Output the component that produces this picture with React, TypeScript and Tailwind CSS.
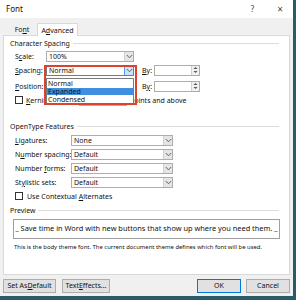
import React from "react";

const U = ({ c }: { c: string }) => <span className="underline underline-offset-[1px]">{c}</span>;

const Chevron = () => (
  <svg width="7" height="5" viewBox="0 0 7 5" className="block">
    <path d="M0.8 1 L3.5 3.8 L6.2 1" fill="none" stroke="#555" strokeWidth="0.9" />
  </svg>
);

const Combo = ({ value, w, active }: { value: string; w: string; active?: boolean }) => (
  <div className={`${w} h-[11px] flex items-stretch border ${active ? "border-[#7a7a7a]" : "border-[#adadad]"} bg-white`}>
    <div className="flex-1 flex items-center pl-[2px] text-[7px] leading-none">{value}</div>
    <div className={`w-[9px] flex items-center justify-center ${active ? "bg-[#cce4f7] border-l border-[#569de5]" : "bg-[#e5e5e5] border-l border-[#d0d0d0]"}`}>
      <Chevron />
    </div>
  </div>
);

const Spin = () => (
  <div className="w-[46px] h-[11px] flex border border-[#adadad] bg-white">
    <div className="flex-1" />
    <div className="w-[8px] flex flex-col items-center justify-center bg-[#f0f0f0] border-l border-[#d0d0d0]">
      <svg width="5" height="8" viewBox="0 0 5 8">
        <path d="M0.5 3 L2.5 1 L4.5 3 Z" fill="#555" />
        <path d="M0.5 5 L2.5 7 L4.5 5 Z" fill="#555" />
      </svg>
    </div>
  </div>
);

const Check = () => <div className="w-[8px] h-[8px] border border-[#333] bg-white" />;

const Header = ({ children }: { children: React.ReactNode }) => (
  <div className="h-[12px] flex items-center pl-[6px] pr-[10px] gap-[3px]">
    <span className="text-[7px] leading-none whitespace-nowrap">{children}</span>
    <div className="flex-1 h-px bg-[#dcdcdc]" />
  </div>
);

const OTRow = ({ label, value, mt }: { label: React.ReactNode; value: string; mt: string }) => (
  <div className={`h-[12px] flex items-center pl-[11px] ${mt}`}>
    <span className="w-[56px] text-[7px] leading-none whitespace-nowrap">{label}</span>
    <Combo value={value} w="w-[102px]" />
  </div>
);

export default function App() {
  return (
    <div
      className="w-[296px] h-[300px] bg-[#2d5a69] text-[#111] overflow-hidden"
      style={{ fontFamily: '"Noto Sans", "Open Sans", sans-serif' }}
    >
      <div className="w-[293px] h-[296px] bg-[#f0f0f0] flex flex-col">
        {/* title bar */}
        <div className="h-[18px] bg-white flex items-center pl-[6px] pr-[10px]">
          <span className="text-[8px] leading-none flex-1">Font</span>
          <span className="text-[8px] leading-none text-[#444] mr-[23px]">?</span>
          <span className="text-[10px] leading-none text-[#444]">×</span>
        </div>
        {/* tabs */}
        <div className="h-[17px] flex items-end pl-[3px] relative">
          <div className="w-[34px] h-[12px] flex items-center justify-center text-[7px] leading-none pl-[4px]">
            Fo<U c="n" />t
          </div>
          <div className="w-[41px] h-[13px] bg-white border border-b-0 border-[#d9d9d9] flex items-center justify-center text-[7px] leading-none relative top-px z-10">
            A<U c="d" />vanced
          </div>
        </div>
        {/* panel */}
        <div className="mx-[3px] h-[240px] bg-white border border-[#d9d9d9] flex flex-col relative">
          <div className="mt-[1px]" />
          <Header>Character Spacing</Header>
          {/* scale */}
          <div className="h-[12px] mt-[1px] flex items-center pl-[11px]">
            <span className="w-[31px] text-[7px] leading-none">S<U c="c" />ale:</span>
            <Combo value="100%" w="w-[88px]" />
          </div>
          {/* spacing */}
          <div className="h-[12px] mt-[2px] flex items-center pl-[11px]">
            <span className="w-[31px] text-[7px] leading-none"><U c="S" />pacing:</span>
            <Combo value="Normal" w="w-[88px]" active />
            <span className="ml-[8px] w-[12px] text-[7px] leading-none"><U c="B" />y:</span>
            <Spin />
          </div>
          {/* position */}
          <div className="h-[12px] mt-[4px] flex items-center pl-[11px]">
            <span className="w-[31px] text-[7px] leading-none"><U c="P" />osition:</span>
            <Combo value="" w="w-[88px]" />
            <span className="ml-[8px] w-[12px] text-[7px] leading-none">B<U c="y" />:</span>
            <Spin />
          </div>
          {/* kerning */}
          <div className="h-[12px] mt-[2px] flex items-center pl-[11px]">
            <Check />
            <span className="ml-[3px] w-[53px] text-[7px] leading-none whitespace-nowrap"><U c="K" />erning for fonts:</span>
            <div className="w-[48px] h-[11px] border border-[#adadad] bg-white" />
            <span className="ml-[3px] text-[7px] leading-none whitespace-nowrap">Points and above</span>
          </div>

          <div className="mt-[14px]" />
          <Header>OpenType Features</Header>
          <OTRow mt="mt-[2px]" label={<><U c="L" />igatures:</>} value="None" />
          <OTRow mt="mt-[2px]" label={<>N<U c="u" />mber spacing:</>} value="Default" />
          <OTRow mt="mt-[2px]" label={<>Number <U c="f" />orms:</>} value="Default" />
          <OTRow mt="mt-[2px]" label={<>St<U c="y" />listic sets:</>} value="Default" />
          <div className="h-[12px] mt-[2px] flex items-center pl-[11px]">
            <Check />
            <span className="ml-[4px] text-[7px] leading-none whitespace-nowrap">Use Contextual <U c="A" />lternates</span>
          </div>
          <div className="mt-[2px]" />
          <Header>Preview</Header>
          <div className="mt-[3px] mx-[9px] h-[20px] border border-[#a0a0a0] flex items-center justify-center">
            <span className="text-[7.4px] leading-none whitespace-nowrap">_ Save time in Word with new buttons that show up where you need them. _</span>
          </div>
          <div className="mt-[3px] h-[12px] flex items-center pl-[10px]">
            <span className="text-[5.9px] leading-none whitespace-nowrap">This is the body theme font. The current document theme defines which font will be used.</span>
          </div>

          {/* dropdown list overlay */}
          <div className="absolute left-[42px] top-[42px] w-[88px] h-[26px] bg-white border border-[#7a7a7a] flex flex-col pt-[1px] z-20">
            <div className="h-[8px] flex items-center pl-[1px] text-[7px] leading-none">Normal</div>
            <div className="h-[8px] flex items-center pl-[1px] text-[7px] leading-none bg-[#3f8ee0] text-[#0b1530]">Expanded</div>
            <div className="h-[8px] flex items-center pl-[1px] text-[7px] leading-none">Condensed</div>
          </div>
          {/* red annotation box */}
          <div className="absolute left-[40px] top-[29px] w-[93px] h-[40px] border-[2px] border-[#d9432f] z-30 pointer-events-none" />
        </div>
        {/* buttons */}
        <div className="flex-1 flex items-center px-[3px]">
          <div className="w-[53px] h-[14px] bg-[#e1e1e1] border border-[#adadad] flex items-center justify-center text-[7px] leading-none">
            Set As <U c="D" />efault
          </div>
          <div className="ml-[6px] w-[48px] h-[14px] bg-[#e1e1e1] border border-[#adadad] flex items-center justify-center text-[7px] leading-none">
            Text <U c="E" />ffects...
          </div>
          <div className="flex-1" />
          <div className="w-[44px] h-[14px] bg-[#e1e1e1] border border-[#0078d7] flex items-center justify-center text-[7px] leading-none">
            OK
          </div>
          <div className="ml-[5px] w-[44px] h-[14px] bg-[#e1e1e1] border border-[#adadad] flex items-center justify-center text-[7px] leading-none">
            Cancel
          </div>
        </div>
      </div>
    </div>
  );
}
